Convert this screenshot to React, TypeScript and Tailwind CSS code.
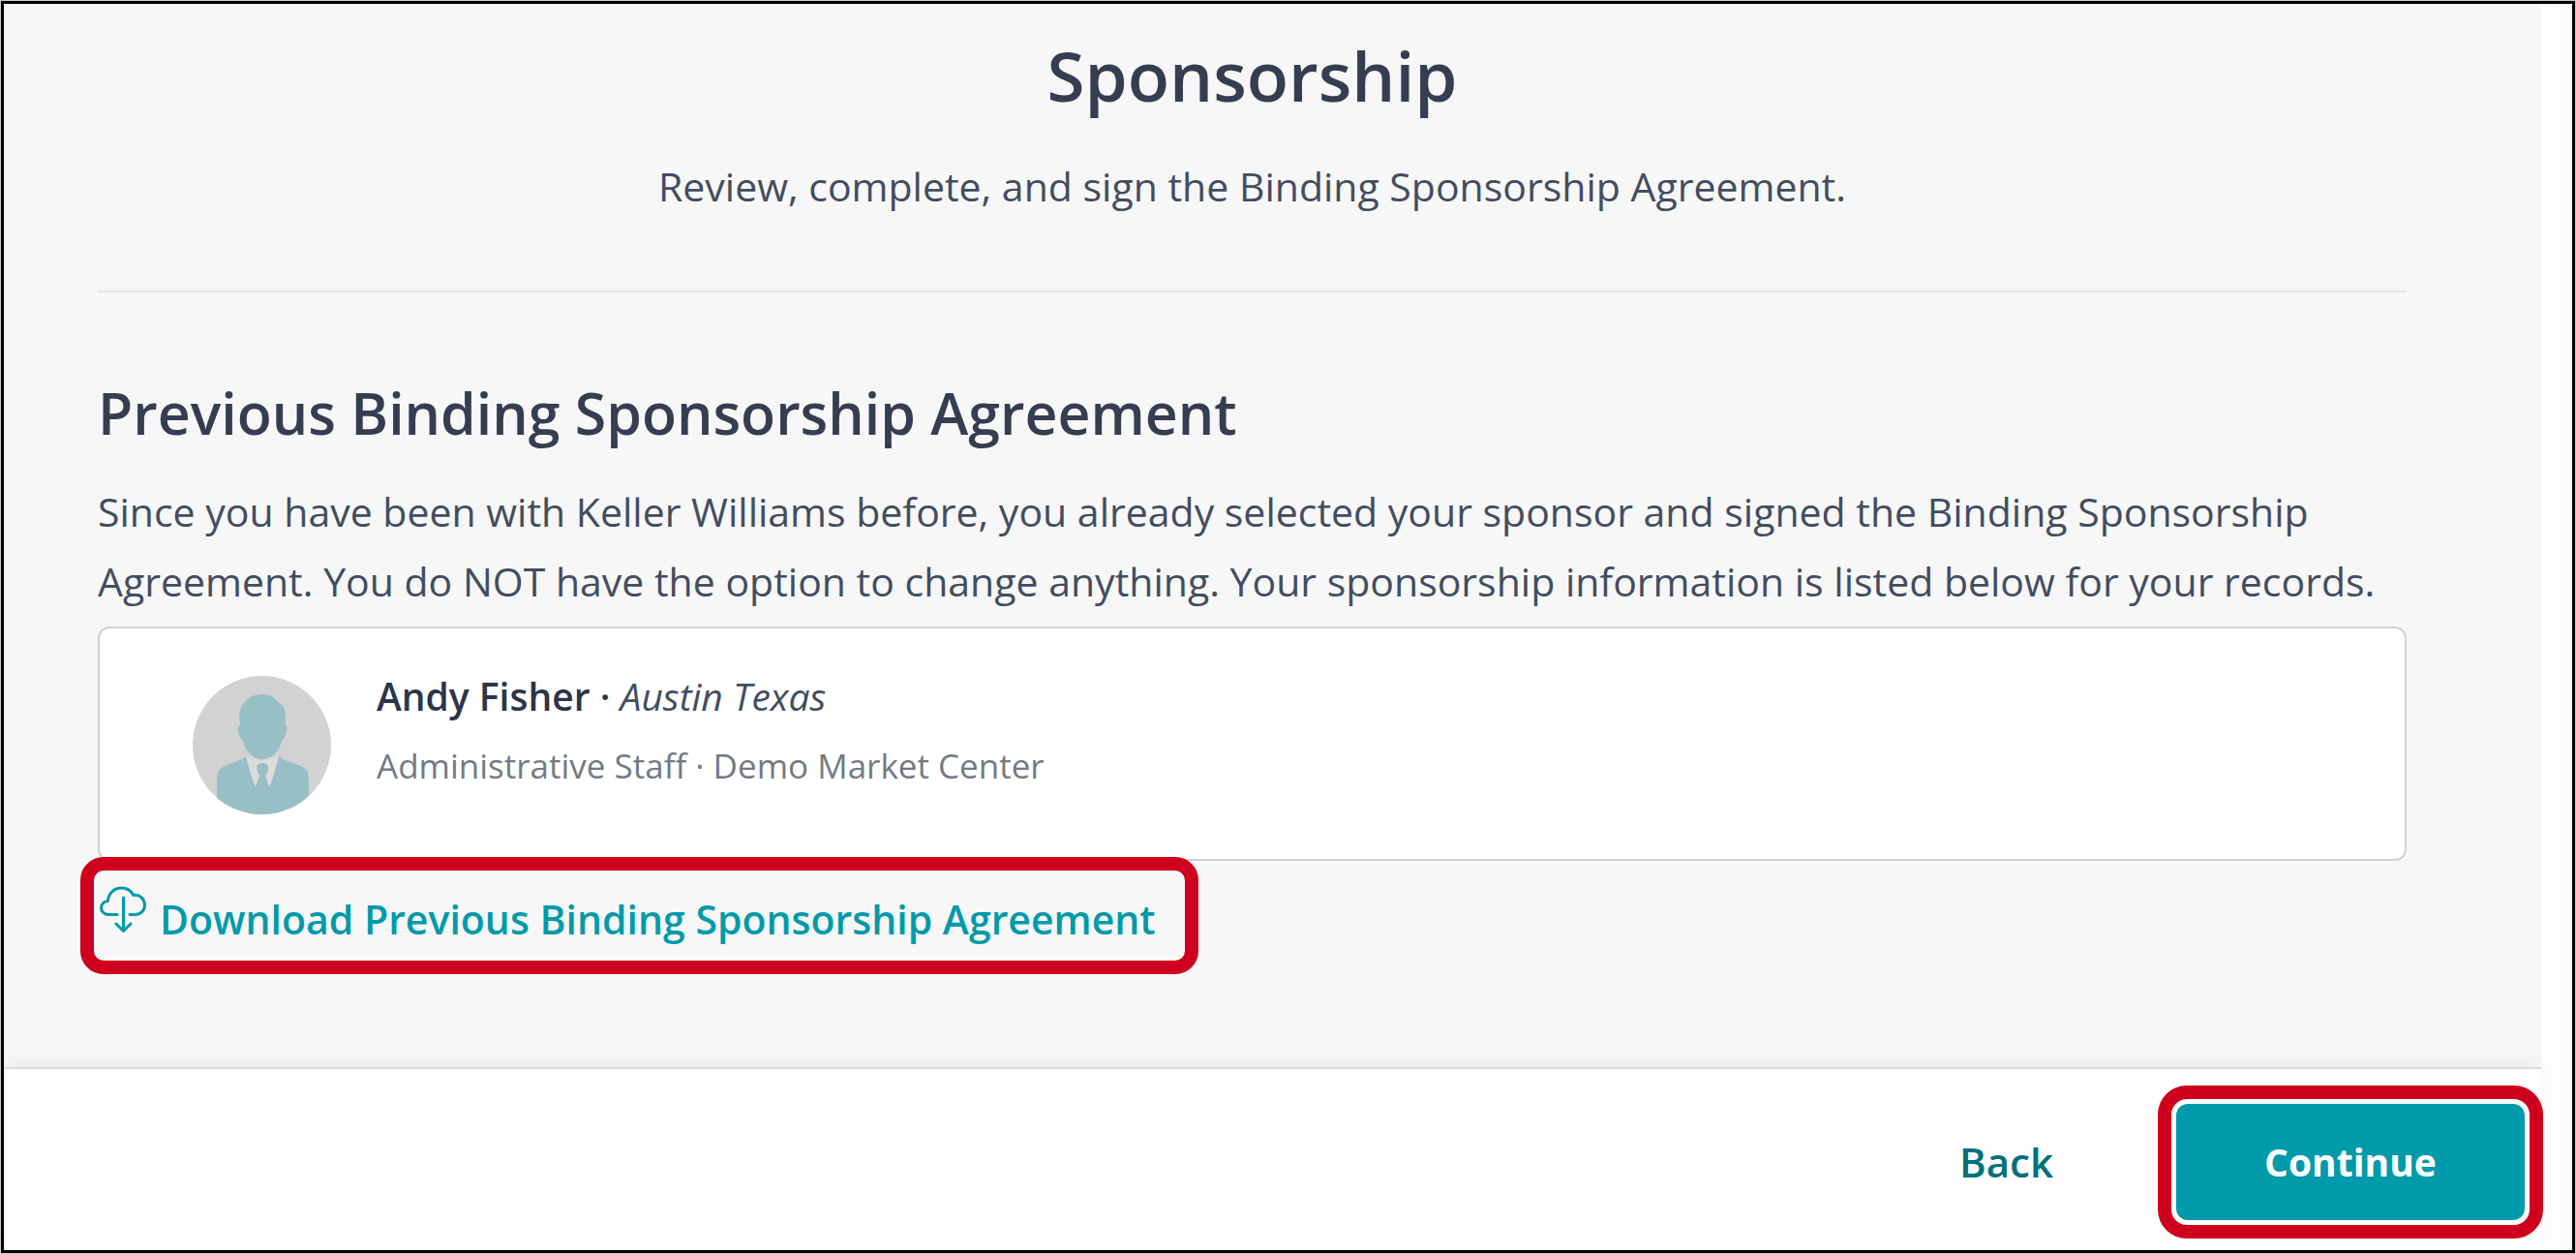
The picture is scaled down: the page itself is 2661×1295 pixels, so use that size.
import type { ReactNode } from "react";

const sponsor = {
  name: "Andy Fisher",
  location: "Austin Texas",
  role: "Administrative Staff",
  marketCenter: "Demo Market Center",
};

function Avatar() {
  return (
    <svg viewBox="0 0 143 143" className="mt-[15px] size-[143px] shrink-0 rounded-full" aria-hidden="true">
      <rect width="143" height="143" fill="#d2d2d2" />
      {/* shirt */}
      <path d="M55 83L64 114H80L89 83L72 88Z" fill="#dcdcdc" />
      <g fill="#98bfc5">
        {/* head */}
        <path d="M72 19C82 19 86 24 89 28C95 30 97 37 95.500 51C97.500 51 97.500 54 97 57C96 62 95 65 92 67C90 78 81 86 72 86C63 86 54 78 52 67C49 65 48 61 47 57C46.500 54 47 52 49.500 51C44 32 56 19 72 19Z" />
        {/* jacket and tie */}
        <path d="M25 143V107C25 100 27 96 33 93C40 90 49 88 55 83C58 94 61 107 65 114.500C67 110 67 107 69.500 103C67 101 66.500 99 66.500 96C64 88 80 88 78 96C78 99 77 101 75 103C77 107 77 110 79 114.500C83 107 86 94 89 83C95 88 104 90 112 93C118 96 120 100 120 107V143Z" />
      </g>
    </svg>
  );
}

function CloudDownloadIcon() {
  return (
    <svg
      viewBox="0 0 48 48"
      className="mb-5 size-12 shrink-0"
      fill="none"
      stroke="currentColor"
      strokeWidth="3"
      strokeLinecap="round"
      strokeLinejoin="round"
      aria-hidden="true"
    >
      <path d="M18 29.500H8.500C4.500 29.500 1.500 26 1.500 22.500C1.500 19 4 16 8.500 15.500C9 7.500 15 2 22.500 2C28 2 32.500 5 35 9.500C42 8.500 46.500 14 46.500 19.500C46.500 25 42.500 29.500 37 29.500H31" />
      <path d="M24.500 12V46M17 39L24.500 46.500L32 39" />
    </svg>
  );
}

// red outline around the thing the reader should click
function Callout({ className, children }: { className: string; children: ReactNode }) {
  return <div className={`w-fit border-14 border-[#ce001d] ${className}`}>{children}</div>;
}

export default function App() {
  return (
    <div className="flex min-h-screen bg-[#c9cccb] p-px font-['Open_Sans','Noto_Sans',sans-serif] text-[41px] leading-[72px] text-[#434d60]">
      <div className="flex flex-1 border-3 border-black bg-[#fdfdfd]">
        <div className="flex flex-1 flex-col">
          <main className="flex-1 bg-[#f7f7f7] pr-[139px] pb-24 pl-[97px]">
            <header className="border-b-2 border-[#e4e5e7] pt-[30px] pb-[72px] text-center">
              <h1 className="text-[71px] leading-[88px] font-semibold text-[#353e51]">Sponsorship</h1>
              <p className="mt-[34px]">Review, complete, and sign the Binding Sponsorship Agreement.</p>
            </header>

            <h2 className="mt-[84px] text-[59px] leading-[80px] font-semibold text-[#353e51]">
              Previous Binding Sponsorship Agreement
            </h2>
            <p className="mt-[26px]">
              Since you have been with Keller Williams before, you already selected your sponsor and signed the
              Binding Sponsorship Agreement. You do NOT have the option to change anything. Your sponsorship
              information is listed below for your records.
            </p>

            <section className="mt-[11px] flex gap-[47px] rounded-xl border-2 border-[#ced3d8] bg-white px-24 pt-[34px] pb-[46px]">
              <Avatar />
              <div>
                <p className="text-[39px]">
                  <span className="font-semibold text-[#2c3549]">{sponsor.name} · </span>
                  <em>{sponsor.location}</em>
                </p>
                <p className="text-[35px] text-[#737a85]">
                  {sponsor.role} · {sponsor.marketCenter}
                </p>
              </div>
            </section>

            <Callout className="-mt-1 -ml-[18px] rounded-3xl">
              <a
                href="#download"
                className="flex items-center gap-[14px] pt-[14px] pr-[30px] pb-[7px] pl-[6px] font-semibold text-[#009aaa]"
              >
                <CloudDownloadIcon />
                Download Previous Binding Sponsorship Agreement
              </a>
            </Callout>
          </main>

          <footer className="relative flex items-center justify-end gap-[108px] border-t-2 border-[#dddde0] bg-[#fefefe] pt-[17px] pb-3 shadow-[0_-4px_16px_rgba(40,50,80,0.06)]">
            <button type="button" className="text-[42px] font-semibold text-[#00707a]">
              Back
            </button>
            <Callout className="-mr-0.5 rounded-[30px] p-[5px]">
              <button
                type="button"
                className="block h-[120px] w-[360px] rounded-xl bg-[#009aaa] text-[39px] font-bold text-white"
              >
                Continue
              </button>
            </Callout>
          </footer>
        </div>
        <div className="w-8 bg-linear-to-r from-[#ffffff] to-[#fafafa]" />
      </div>
    </div>
  );
}
